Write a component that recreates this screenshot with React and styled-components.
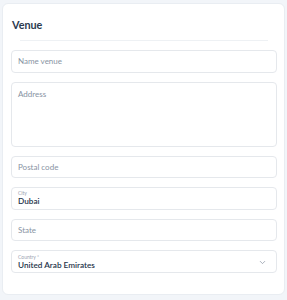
import { createGlobalStyle } from "styled-components";
import styled from "styled-components";
import { ChevronDown } from "lucide-react";

const GlobalStyle = createGlobalStyle`
  html, body {
    margin: 0;
    padding: 0;
    background: #f2f5f9;
    font-family: Lato, "Noto Sans", sans-serif;
  }
`;

const App = () => {
  return (
    <Page>
      <GlobalStyle />
      <Card>
        <Title>Venue</Title>
        <Divider />
        <Fields>
          <Field>
            <Placeholder>Name venue</Placeholder>
          </Field>
          <Field tall>
            <Placeholder>Address</Placeholder>
          </Field>
          <Field>
            <Placeholder>Postal code</Placeholder>
          </Field>
          <Field>
            <Filled>
              <Label>City</Label>
              <Value>Dubai</Value>
            </Filled>
          </Field>
          <Field>
            <Placeholder>State</Placeholder>
          </Field>
          <Field>
            <Filled>
              <Label>Country *</Label>
              <Value>United Arab Emirates</Value>
            </Filled>
            <Chevron>
              <ChevronDown size={9} strokeWidth={2} />
            </Chevron>
          </Field>
        </Fields>
      </Card>
    </Page>
  );
};

// Styled components
const Page = styled.div`
  padding: 3px 2px 5px 2px;
`;

const Card = styled.div`
  box-sizing: border-box;
  width: 283px;
  height: 292px;
  background: #ffffff;
  border: 1px solid #e9edf2;
  border-radius: 6px;
  padding: 13px 7px 0 8px;
`;

const Title = styled.div`
  height: 15px;
  line-height: 15px;
  padding-left: 1px;
  font-size: 10.8px;
  font-weight: 700;
  color: #2b3a4f;
`;

const Divider = styled.div`
  height: 1px;
  background: #eef1f4;
  margin: 8px 9px 9px 9px;
`;

const Fields = styled.div`
  display: flex;
  flex-direction: column;
  gap: 9px;
`;

const Field = styled.div`
  box-sizing: border-box;
  height: ${(p) => (p.tall ? "65px" : "22.6px")};
  border: 1px solid #e5e8ec;
  border-radius: 4px;
  padding: 0 9px 0 6px;
  display: flex;
  align-items: ${(p) => (p.tall ? "flex-start" : "center")};
  justify-content: space-between;
  padding-top: ${(p) => (p.tall ? "6px" : "0")};
`;

const Placeholder = styled.span`
  font-size: 8px;
  color: #8893a3;
`;

const Filled = styled.div`
  display: flex;
  flex-direction: column;
  line-height: 1;
`;

const Label = styled.span`
  font-size: 5px;
  color: #9aa3b1;
  margin-bottom: 1px;
`;

const Value = styled.span`
  font-size: 8.2px;
  font-weight: 600;
  color: #25344a;
`;

const Chevron = styled.span`
  display: flex;
  color: #8d97a6;
  margin-top: 1px;
`;

export default App;
